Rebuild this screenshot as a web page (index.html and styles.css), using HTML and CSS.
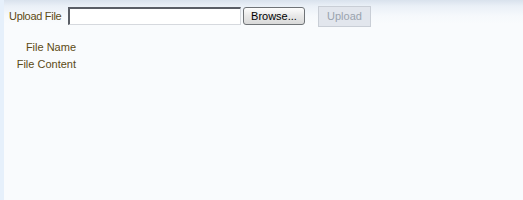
FILE: index.html
```html
<!DOCTYPE html>
<html lang="en">
<head>
  <meta charset="UTF-8" />
  <title>Upload File</title>
  <link rel="stylesheet" href="styles.css">
</head>
<body>
  <div class="panel">
    <div class="upload-row">
      <label for="file" class="field-label">Upload File</label>
      <span class="file-box"></span>
      <button type="button" class="browse">Browse...</button>
      <button type="button" class="upload" disabled>Upload</button>
    </div>
    <div class="details">
      <div class="detail-label">File Name</div>
      <div class="detail-label">File Content</div>
    </div>
  </div>
</body>
</html>
```

FILE: styles.css
```css
html, body {
  margin: 0;
  height: 100%;
}
body {
  font-family: "Liberation Sans", Arial, sans-serif;
  font-size: 11px;
  background-color: #f9fbfd;
}
.panel {
  height: 100%;
  box-sizing: border-box;
  border-left: 4px solid #e6f0fb;
  background: linear-gradient(to bottom, #d9e2ed 0px, #eaf0f7 6px, #f6f9fc 16px, #f9fbfd 24px);
}
.upload-row {
  display: flex;
  align-items: center;
  padding: 5px 0 0 5px;
  height: 22px;
}
.field-label {
  color: #5c4a14;
  letter-spacing: -0.3px;
  width: 59px;
}
.file-box {
  width: 170px;
  height: 15px;
  background: #fff;
  border-top: 2px solid #5a5e66;
  border-left: 2px solid #5a5e66;
  border-right: 1px solid #d6d9de;
  border-bottom: 1px solid #d6d9de;
}
button {
  font-family: "Liberation Sans", Arial, sans-serif;
  font-size: 11px;
  padding: 0;
}
.browse {
  margin-left: 2px;
  width: 62px;
  height: 18px;
  border: 1px solid #6f7377;
  border-radius: 3px;
  background: linear-gradient(to bottom, #fdfdfd, #e8e8e8 50%, #d9d9d9);
  color: #000;
}
.upload {
  margin-left: 13px;
  width: 53px;
  height: 21px;
  border: 1px solid #c9ced6;
  background: #e2e6ed;
  color: #9aa3ad;
}
.details {
  display: grid;
  grid-template-columns: 72px;
  row-gap: 5px;
  margin-top: 14px;
}
.detail-label {
  text-align: right;
  color: #5c4a14;
}
```
